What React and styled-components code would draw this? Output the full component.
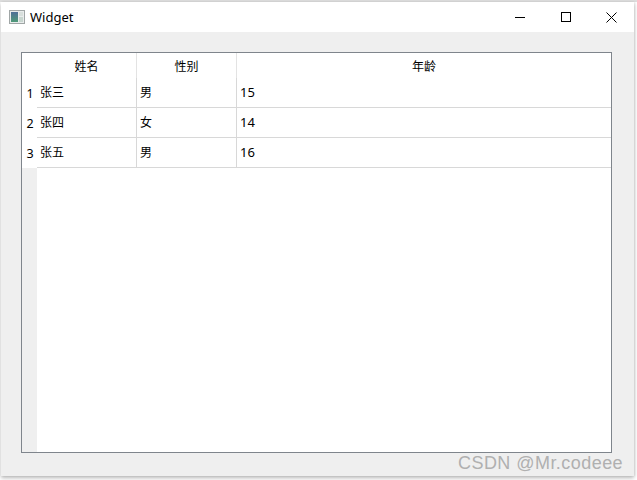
import React from "react";
import styled, { createGlobalStyle } from "styled-components";

const Global = createGlobalStyle`
  html, body { margin: 0; padding: 0; background: #ffffff; }
  #root { width: 637px; height: 480px; overflow: hidden; }
`;

const FONT = `"Noto Sans", "Noto Sans CJK SC", sans-serif`;
const CJK = `"Noto Sans CJK SC", "Noto Sans", sans-serif`;

const Screen = styled.div`
  position: relative;
  width: 637px;
  height: 480px;
  display: flex;
  flex-direction: column;
  background: #ffffff;
  overflow: hidden;
`;
const TopEdge = styled.div`
  height: 2px;
  flex: none;
  background: #dedede;
`;
const Frame = styled.div`
  width: 633px;
  height: 474px;
  flex: none;
  margin-left: 1px;
  display: flex;
  flex-direction: column;
  background: #efefef;
  box-shadow: 0 2px 4px rgba(0, 0, 0, 0.28), 1px 0 2px rgba(0, 0, 0, 0.08);
`;
const TitleBar = styled.div`
  height: 30px;
  flex: none;
  display: flex;
  align-items: center;
  background: #ffffff;
`;
const AppIcon = styled.svg`
  width: 16px;
  height: 14px;
  margin-left: 8px;
  flex: none;
`;
const Title = styled.div`
  margin-left: 5px;
  padding-bottom: 1px;
  flex: 1;
  font: 13px ${FONT};
  color: #000;
`;
const WinButton = styled.div`
  width: ${(p) => p.$w || 46}px;
  height: 30px;
  flex: none;
  display: flex;
  align-items: center;
  justify-content: center;
`;
const Content = styled.div`
  flex: 1;
  min-height: 0;
  padding: 20px 22px 23px 20px;
  display: flex;
`;
const Table = styled.div`
  flex: 1;
  display: grid;
  grid-template-columns: 15px 100px 100px 1fr;
  grid-template-rows: 25px 30px 30px 30px 1fr;
  border: 1px solid #7f858c;
  background: #ffffff;
`;
const Corner = styled.div`
  background: #ffffff;
`;
const HeaderCell = styled.div`
  display: flex;
  align-items: center;
  justify-content: center;
  background: #ffffff;
  font: 12px ${CJK};
  color: #000;
  border-right: ${(p) => (p.$last ? "none" : "1px solid #e3e3e3")};
`;
const RowHead = styled.div`
  display: flex;
  align-items: center;
  justify-content: center;
  padding: 0 0 0 1px;
  box-sizing: border-box;
  background: #ffffff;
  font: 12.5px ${FONT};
  color: #000;
`;
const Cell = styled.div`
  display: flex;
  align-items: center;
  box-sizing: border-box;
  padding: 0 0 ${(p) => (p.$num ? 2 : 3)}px 3px;
  font: ${(p) => (p.$num ? `13px ${FONT}` : `12px ${CJK}`)};
  color: #000;
  border-right: ${(p) => (p.$num ? "none" : "1px solid #d8d8d8")};
  border-bottom: 1px solid #d8d8d8;
`;
const HeaderFill = styled.div`
  background: #efefef;
`;
const Empty = styled.div`
  grid-column: 2 / 5;
  background: #ffffff;
`;
const Watermark = styled.div`
  position: absolute;
  left: 458px;
  top: 453px;
  font: 18px "Liberation Sans", sans-serif;
  letter-spacing: 0.45px;
  color: #b0b0b0;
  white-space: nowrap;
`;

const rows = [
  ["1", "张三", "男", "15"],
  ["2", "张四", "女", "14"],
  ["3", "张五", "男", "16"],
];

export default function App() {
  return (
    <Screen>
      <Global />
      <TopEdge />
      <Frame>
        <TitleBar>
          <AppIcon viewBox="0 0 16 14">
            <defs>
              <linearGradient id="pane" x1="0" y1="0" x2="0" y2="1">
                <stop offset="0" stopColor="#4f6f98" />
                <stop offset="1" stopColor="#4f9a78" />
              </linearGradient>
            </defs>
            <rect x="0.5" y="0.5" width="15" height="13" fill="#e9ecec" stroke="#a0a6a6" />
            <rect x="2" y="2" width="7" height="10" fill="url(#pane)" />
            <rect x="10" y="2" width="4" height="4" fill="#d8dfdc" />
            <rect x="10" y="7" width="4" height="5" fill="#c8d6cf" />
          </AppIcon>
          <Title>Widget</Title>
          <WinButton>
            <svg width="10" height="10" viewBox="0 0 10 10">
              <path d="M0 5.5H10" stroke="#000" strokeWidth="1" />
            </svg>
          </WinButton>
          <WinButton $w={45}>
            <svg width="10" height="10" viewBox="0 0 10 10">
              <rect x="0.5" y="0.5" width="9" height="9" fill="none" stroke="#000" />
            </svg>
          </WinButton>
          <WinButton>
            <svg width="11" height="11" viewBox="0 0 11 11">
              <path d="M0.5 0.5L10.5 10.5M10.5 0.5L0.5 10.5" stroke="#000" strokeWidth="1" fill="none" />
            </svg>
          </WinButton>
        </TitleBar>
        <Content>
          <Table>
            <Corner />
            <HeaderCell>姓名</HeaderCell>
            <HeaderCell>性别</HeaderCell>
            <HeaderCell $last>年龄</HeaderCell>
            {rows.map((r) => (
              <React.Fragment key={r[0]}>
                <RowHead>{r[0]}</RowHead>
                <Cell>{r[1]}</Cell>
                <Cell>{r[2]}</Cell>
                <Cell $num>{r[3]}</Cell>
              </React.Fragment>
            ))}
            <HeaderFill />
            <Empty />
          </Table>
        </Content>
      </Frame>
      <Watermark>CSDN @Mr.codeee</Watermark>
    </Screen>
  );
}
